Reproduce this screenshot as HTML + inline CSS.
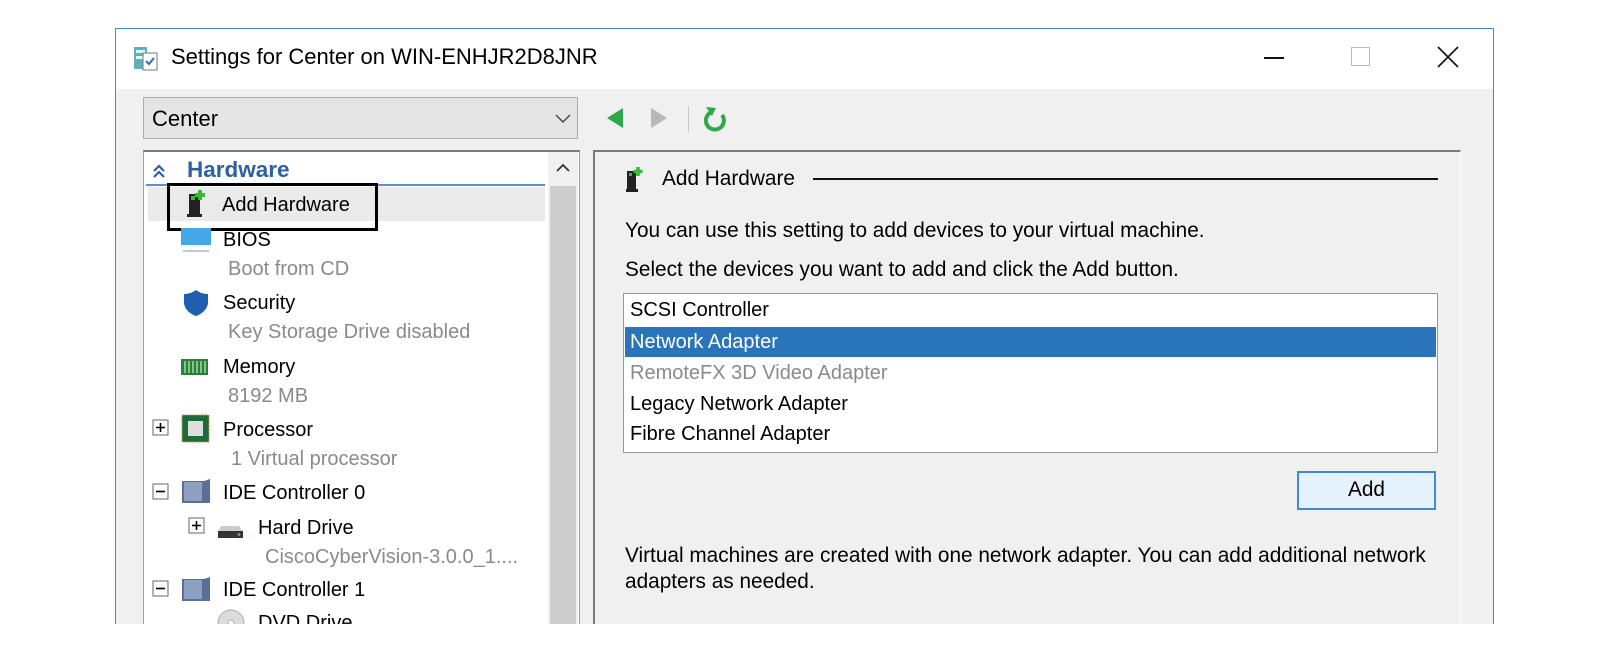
<!DOCTYPE html>
<html><head><meta charset="utf-8"><style>
*{margin:0;padding:0;box-sizing:border-box}
body{width:1611px;height:651px;background:#fff;position:relative;overflow:hidden;font-family:"Liberation Sans",sans-serif;color:#000}
.a{position:absolute;white-space:nowrap}
.t{font-size:20px;line-height:24px}
.r{font-size:20.8px;line-height:24px}
.g{color:#8a8a8a}
</style></head><body>
<div class="a" style="left:115px;top:28px;width:1379px;height:596px;border:1px solid #3c8ad8;border-bottom:none;background:#f0f0f0"></div>
<div class="a" style="left:116px;top:29px;width:1377px;height:60px;background:#fff"></div>
<svg class="a" style="left:133px;top:44px" width="26" height="28" viewBox="0 0 26 28"><rect x="1" y="3" width="13" height="22" fill="#5fb0b8"/><rect x="3" y="6" width="9" height="3" fill="#dff"/><rect x="3" y="12" width="9" height="3" fill="#dff"/><rect x="10" y="9" width="14" height="17" fill="#fff" stroke="#777"/><path d="M13 17l3 3 5-6" stroke="#2a6fc0" stroke-width="2" fill="none"/></svg>
<div class="a" style="left:171px;top:44px;font-size:22px;line-height:26px">Settings for Center on WIN-ENHJR2D8JNR</div>
<div class="a" style="left:1264px;top:57px;width:20px;height:2px;background:#111"></div>
<div class="a" style="left:1351px;top:47px;width:19px;height:19px;border:1px solid #bbb"></div>
<svg class="a" style="left:1437px;top:46px" width="22" height="22"><path d="M1 1L21 21M21 1L1 21" stroke="#111" stroke-width="1.6"/></svg>
<div class="a" style="left:143px;top:97px;width:435px;height:42px;border:1px solid #adadad;background:#e5e5e5"></div>
<div class="a" style="left:152px;top:106px;font-size:22px;line-height:26px">Center</div>
<svg class="a" style="left:555px;top:112px" width="16" height="12"><path d="M1 3l7 7 7-7" stroke="#444" stroke-width="1.4" fill="none"/></svg>
<svg class="a" style="left:607px;top:106px" width="125" height="26"><path d="M0 12L16 2V22Z" fill="#2ea84a"/><path d="M60 12L44 2V22Z" fill="#b8b8b8"/><rect x="81" y="0" width="1" height="26" fill="#c8c8c8"/><path d="M115 9a9 9 0 1 1-10-3" stroke="#2ea84a" stroke-width="4" fill="none"/><path d="M99 1l10 1-4 8z" fill="#2ea84a"/></svg>
<div class="a" style="left:143px;top:150px;width:437px;height:480px;border:1px solid #a0a0a0;border-top:2px solid #7a7a7a;background:#fff"></div>
<div class="a" style="left:548px;top:152px;width:30px;height:480px;background:#f0f0f0"></div>
<div class="a" style="left:550px;top:186px;width:26px;height:440px;background:#cdcdcd"></div>
<svg class="a" style="left:555px;top:162px" width="16" height="12"><path d="M2 9l6-6 6 6" stroke="#333" stroke-width="1.8" fill="none"/></svg>
<svg class="a" style="left:152px;top:163px" width="14" height="16"><path d="M2 8l5-5 5 5M2 14l5-5 5 5" stroke="#2c5fa8" stroke-width="2.2" fill="none"/></svg>
<div class="a" style="left:187px;top:157px;font-size:22.5px;font-weight:bold;color:#2c5fa8;line-height:26px">Hardware</div>
<div class="a" style="left:146px;top:184px;width:399px;height:2px;background:#5b8fcf"></div>
<div class="a" style="left:148px;top:187px;width:397px;height:34px;background:#eaeaea"></div>
<div class="a" style="left:167px;top:183px;width:211px;height:48px;border:3px solid #000"></div>
<svg class="a" style="left:185px;top:189px" width="28" height="30"><rect x="4" y="5" width="11" height="20" fill="#222"/><rect x="6" y="7" width="4" height="4" fill="#3b3"/><rect x="2" y="25" width="15" height="3" fill="#222"/><path d="M15 1v10M10 6h10" stroke="#3b3" stroke-width="4"/></svg>
<div class="a t" style="left:222px;top:193px">Add Hardware</div>
<svg class="a" style="left:180px;top:227px" width="34" height="26"><rect x="1" y="1" width="30" height="17" fill="#44a8e8"/><rect x="3" y="23" width="26" height="2" fill="#bcd"/></svg>
<div class="a t" style="left:223px;top:228px">BIOS</div>
<div class="a t g" style="left:228px;top:257px">Boot from CD</div>
<svg class="a" style="left:182px;top:288px" width="28" height="30"><path d="M14 2C10 5 6 6 2 6v8c0 7 6 12 12 14 6-2 12-7 12-14V6c-4 0-8-1-12-4z" fill="#1f5fae"/></svg>
<div class="a t" style="left:223px;top:291px">Security</div>
<div class="a t g" style="left:228px;top:320px">Key Storage Drive disabled</div>
<svg class="a" style="left:180px;top:357px" width="30" height="20"><rect x="1" y="2" width="27" height="16" fill="#2e7d3a"/><path d="M5 4v12M9 4v12M13 4v12M17 4v12M21 4v12M25 4v12" stroke="#9ee09e" stroke-width="1.5"/></svg>
<div class="a t" style="left:223px;top:355px">Memory</div>
<div class="a t g" style="left:228px;top:384px">8192 MB</div>
<svg class="a" style="left:152px;top:419px" width="18" height="18"><rect x="1" y="1" width="15" height="15" fill="#fff" stroke="#666"/><path d="M4 8.5h9M8.5 4v9" stroke="#000" stroke-width="1.6"/></svg>
<svg class="a" style="left:181px;top:414px" width="30" height="30"><rect x="1" y="1" width="27" height="27" fill="#1d6b3a" stroke="#b9a24a" stroke-dasharray="2 1"/><rect x="7" y="7" width="15" height="15" fill="#ddd"/></svg>
<div class="a t" style="left:223px;top:418px">Processor</div>
<div class="a t g" style="left:231px;top:447px">1 Virtual processor</div>
<svg class="a" style="left:152px;top:483px" width="18" height="18"><rect x="1" y="1" width="15" height="15" fill="#fff" stroke="#666"/><path d="M4 8.5h9" stroke="#000" stroke-width="1.6"/></svg>
<svg class="a" style="left:180px;top:477px" width="32" height="28"><path d="M2 4h22l6-2v24l-6 0H2z" fill="#5a6f96"/><rect x="4" y="5" width="18" height="19" fill="#8ea0c0"/></svg>
<div class="a t" style="left:223px;top:481px">IDE Controller 0</div>
<svg class="a" style="left:188px;top:517px" width="18" height="18"><rect x="1" y="1" width="15" height="15" fill="#fff" stroke="#666"/><path d="M4 8.5h9M8.5 4v9" stroke="#000" stroke-width="1.6"/></svg>
<svg class="a" style="left:217px;top:520px" width="28" height="20"><path d="M4 6h18l4 6H1z" fill="#ccc"/><rect x="1" y="11" width="25" height="7" fill="#333"/><circle cx="22" cy="14.5" r="1.5" fill="#3c3"/></svg>
<div class="a t" style="left:258px;top:516px">Hard Drive</div>
<div class="a t g" style="left:265px;top:545px">CiscoCyberVision-3.0.0_1....</div>
<svg class="a" style="left:152px;top:580px" width="18" height="18"><rect x="1" y="1" width="15" height="15" fill="#fff" stroke="#666"/><path d="M4 8.5h9" stroke="#000" stroke-width="1.6"/></svg>
<svg class="a" style="left:180px;top:575px" width="32" height="28"><path d="M2 4h22l6-2v24l-6 0H2z" fill="#5a6f96"/><rect x="4" y="5" width="18" height="19" fill="#8ea0c0"/></svg>
<div class="a t" style="left:223px;top:578px">IDE Controller 1</div>
<svg class="a" style="left:216px;top:608px" width="30" height="30"><circle cx="15" cy="15" r="13" fill="#ddd" stroke="#aaa"/><circle cx="15" cy="15" r="3" fill="#fff" stroke="#aaa"/></svg>
<div class="a t" style="left:258px;top:611px">DVD Drive</div>
<div class="a" style="left:593px;top:150px;width:868px;height:480px;border-left:2px solid #7a7a7a;border-top:2px solid #7a7a7a;border-right:1px solid #fff;background:#f0f0f0"></div>
<svg class="a" style="left:625px;top:165px" width="22" height="30"><rect x="2" y="6" width="9" height="18" fill="#222"/><rect x="4" y="8" width="3" height="3" fill="#3b3"/><rect x="1" y="24" width="12" height="3" fill="#222"/><path d="M13 2v9M8.5 6.5h9" stroke="#3b3" stroke-width="3.5"/></svg>
<div class="a r" style="left:662px;top:167px">Add Hardware</div>
<div class="a" style="left:813px;top:178px;width:625px;height:2px;background:#111"></div>
<div class="a r" style="left:625px;top:219px">You can use this setting to add devices to your virtual machine.</div>
<div class="a r" style="left:625px;top:258px">Select the devices you want to add and click the Add button.</div>
<div class="a" style="left:623px;top:293px;width:815px;height:160px;border:1px solid #999;background:#fff"></div>
<div class="a" style="left:625px;top:327px;width:811px;height:30px;background:#2a74bb"></div>
<div class="a t" style="left:630px;top:298px">SCSI Controller</div>
<div class="a t" style="left:630px;top:330px;color:#fff">Network Adapter</div>
<div class="a t g" style="left:630px;top:361px">RemoteFX 3D Video Adapter</div>
<div class="a t" style="left:630px;top:392px">Legacy Network Adapter</div>
<div class="a t" style="left:630px;top:422px">Fibre Channel Adapter</div>
<div class="a" style="left:1297px;top:471px;width:139px;height:39px;border:2px solid #3c8ad8;background:#e5f1fb"></div>
<div class="a r" style="left:1297px;top:478px;width:139px;text-align:center">Add</div>
<div class="a r" style="left:625px;top:544px">Virtual machines are created with one network adapter. You can add additional network</div>
<div class="a r" style="left:625px;top:570px">adapters as needed.</div>
<div class="a" style="left:0;top:624px;width:1611px;height:27px;background:#fff"></div>
</body></html>
